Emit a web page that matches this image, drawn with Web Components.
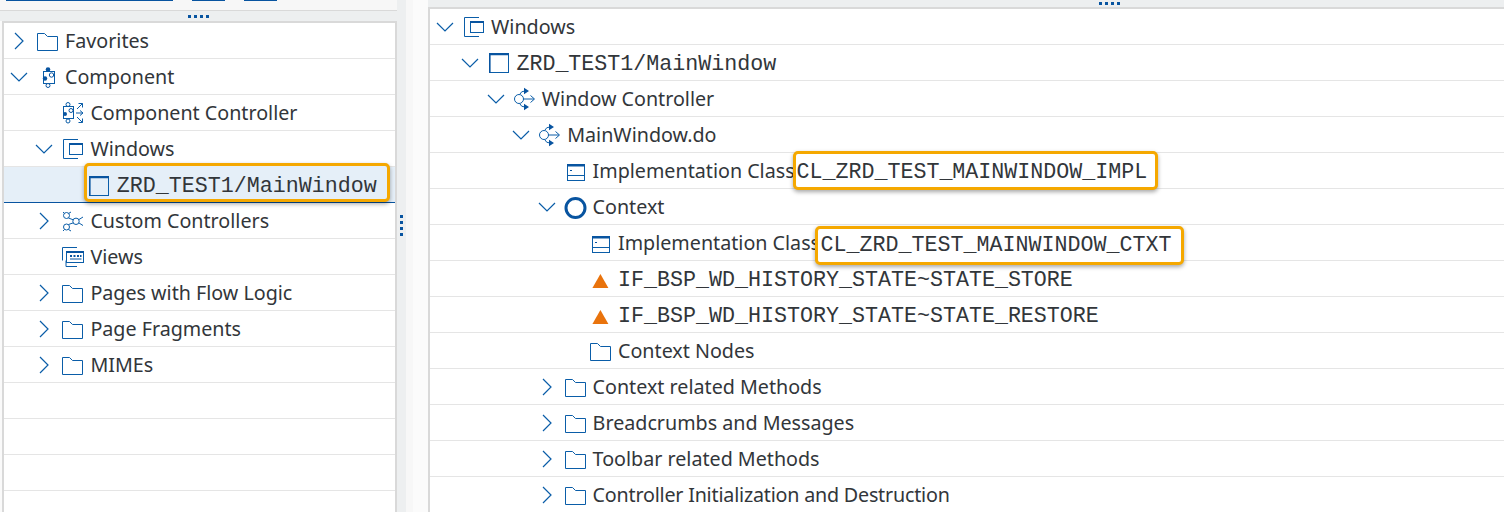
<!DOCTYPE html>
<html>
<head>
<meta charset="utf-8">
<title>Component tree</title>
<style>
	html, body { margin: 0; height: 512px; overflow: hidden; background: #fff; }
	body { font-family: "Noto Sans", sans-serif; color: #32363a; }
</style>
</head>
<body>
<workbench-app>
	<tree-pane slot="left" side="left">
		<tree-row arrow="right" icon="folder">Favorites</tree-row>
		<tree-row arrow="down" icon="component">Component</tree-row>
		<tree-row level="1" icon="compctrl">Component Controller</tree-row>
		<tree-row level="1" arrow="down" icon="windows">Windows</tree-row>
		<tree-row level="2" selected bare>
			<call-out style="--shift:-2px;--start:-2px;--top:7px;--fill:#e5eff8;width:306px"><tree-icon name="window" style="margin-left:-1px;margin-right:7px"></tree-icon>ZRD_TEST1/MainWindow</call-out>
		</tree-row>
		<tree-row level="1" arrow="right" icon="custom">Custom Controllers</tree-row>
		<tree-row level="1" icon="views">Views</tree-row>
		<tree-row level="1" arrow="right" icon="folder">Pages with Flow Logic</tree-row>
		<tree-row level="1" arrow="right" icon="folder">Page Fragments</tree-row>
		<tree-row level="1" arrow="right" icon="folder">MIMEs</tree-row>
		<tree-row></tree-row>
		<tree-row></tree-row>
		<tree-row></tree-row>
		<tree-row></tree-row>
	</tree-pane>
	<tree-pane slot="right" side="right">
		<tree-row arrow="down" icon="windows">Windows</tree-row>
		<tree-row level="1" arrow="down" icon="window" mono>ZRD_TEST1/MainWindow</tree-row>
		<tree-row level="2" arrow="down" icon="controller">Window Controller</tree-row>
		<tree-row level="3" arrow="down" icon="controller">MainWindow.do</tree-row>
		<tree-row level="4" icon="class">Implementation Class<call-out style="--shift:0px;--start:-1.2px;--top:4px;width:365px">CL_ZRD_TEST_MAINWINDOW_IMPL</call-out></tree-row>
		<tree-row level="4" arrow="down" icon="circle">Context</tree-row>
		<tree-row level="5" icon="class">Implementation Class<call-out style="--shift:3px;--start:-5.500px;--pad:3px;width:369px">CL_ZRD_TEST_MAINWINDOW_CTXT</call-out></tree-row>
		<tree-row level="5" icon="triangle" mono>IF_BSP_WD_HISTORY_STATE~STATE_STORE</tree-row>
		<tree-row level="5" icon="triangle" mono>IF_BSP_WD_HISTORY_STATE~STATE_RESTORE</tree-row>
		<tree-row level="5" icon="folder">Context Nodes</tree-row>
		<tree-row level="4" arrow="right" icon="folder">Context related Methods</tree-row>
		<tree-row level="4" arrow="right" icon="folder">Breadcrumbs and Messages</tree-row>
		<tree-row level="4" arrow="right" icon="folder">Toolbar related Methods</tree-row>
		<tree-row level="4" arrow="right" icon="folder" style="letter-spacing:-.2px">Controller Initialization and Destruction</tree-row>
	</tree-pane>
</workbench-app>

<script>
const ICONS = {
	folder: `<path class="s" d="M2.5 21.5V4.5h7l3 3h10v14z"/>`,
	window: `<rect class="s" x="3.5" y="2.5" width="19" height="19"/><path class="f" d="M3 2h20v2.2H3zM3 2h1.6v20H3z"/>`,
	windows: `<path class="s" d="M18 2.5H3.5v19H18"/><rect class="s" x="9.5" y="6.5" width="13" height="11"/><path class="f" d="M9 6h14v2H9z"/>`,
	class: `<rect class="s" x="4.5" y="5.5" width="17" height="16"/><path class="f" d="M4 5h18v2.600H4zM7 11h2v1H7z"/><path class="s" d="M4.500 16.500h17"/>`,
	circle: `<circle cx="12.500" cy="13" r="9.500" fill="none" stroke="#0854a0" stroke-width="3"/>`,
	triangle: `<path d="M4.400 21 12.400 7l8 14z" fill="#e9730c"/>`,
	component: `<circle class="f" cx="13" cy="4.500" r="2.300"/><rect class="s" x="8.500" y="6.500" width="11" height="12"/><circle class="f" cx="10" cy="13.500" r="2.200"/><circle cx="16.500" cy="10" r="2.200" fill="#fff" stroke="#0854a0"/><circle cx="13" cy="20.500" r="2" fill="#fff" stroke="#0854a0"/>`,
	compctrl: `<circle class="s" cx="8" cy="3.500" r="2"/><rect class="s" x="3.500" y="5.500" width="10" height="12"/><circle class="f" cx="5" cy="13" r="2"/><circle cx="11" cy="9.500" r="2" fill="#fff" stroke="#0854a0"/><circle class="s" cx="8" cy="20" r="2"/><path class="s" d="M17 8l5.500-5.500M18.500 2.500h4v4M16 12h7M20 9.500l3 2.500-3 2.500M17 16l5.500 5.500M18.500 21.500h4v-4"/>`,
	custom: `<g stroke-width="1.300"><circle class="s" cx="6.500" cy="6.500" r="3"/><circle class="s" cx="6.500" cy="18" r="3"/><circle class="s" cx="16" cy="12.300" r="3.200"/><path class="s" d="M8.500 9l4.700 1.800M8.500 15.500l4.700-1.600M19 10.500l4-2.500M19 14l4 2.500M3 3l1.500 1.500M11 3 8.500 4.500M3 22l1.500-1.500M11 22l-2.500-1.500"/></g>`,
	views: `<path class="s" d="M17 2.500H2.500v13M6 15.500v6h11"/><rect class="s" x="6.500" y="6.500" width="17" height="11" fill="#fff"/><path class="f" d="M6 6h18v2H6zM10 10h2v2h-2zM13.500 10h2v2h-2zM17 10h2v2h-2zM20 10h1.500v2H20zM10 13.500h11.500v1H10z"/>`,
	controller: `<circle class="s" cx="7" cy="12" r="4.500"/><path class="s" d="M11.500 12H22M18.500 8.500 22.500 12l-4 3.500"/><path class="s" stroke-width="2" d="M8 7q1-3 5-3M8 17q1 3 5 3"/><path class="f" d="M12 .8l5 3.200-5 3.200zM12 16.800l5 3.200-5 3.200z"/>`
};

const iconTemplate = document.createElement("template");
iconTemplate.innerHTML = `
	<style>
		:host { display: block; flex: none; width: 24px; height: 24px; }
		svg { display: block; width: 24px; height: 24px; overflow: visible; }
		.s { fill: none; stroke: #0a5da8; stroke-width: 1; }
		.f { fill: #0854a0; }
	</style>
	<svg viewBox="0 0 24 24"></svg>
`;

class TreeIcon extends HTMLElement {
	static get observedAttributes() {
		return ["name"];
	}

	constructor() {
		super();
		this.attachShadow({ mode: "open" });
		this.shadowRoot.appendChild(iconTemplate.content.cloneNode(true));
	}

	attributeChangedCallback(name, oldValue, newValue) {
		this.shadowRoot.querySelector("svg").innerHTML = ICONS[newValue] || "";
	}
}

const rowTemplate = document.createElement("template");
rowTemplate.innerHTML = `
	<style>
		:host {
			display: flex;
			align-items: center;
			box-sizing: border-box;
			height: 36px;
			padding-left: calc(5px + var(--level, 0) * 25.4px);
			border-bottom: 1px solid #e5e5e5;
			background: #fff;
			font-size: 19.7px;
			white-space: nowrap;
		}
		:host([selected]) { background: #e5eff8; border-bottom-color: #0854a0; }
		:host([mono]) .label { font-family: "Liberation Mono", monospace; font-size: 21.67px; padding-top: 4px; }
		.arrow { flex: none; width: 20px; height: 20px; margin-right: 6px; }
		.arrow path { fill: none; stroke: #0a5da8; stroke-width: 1.2; }
		tree-icon { margin-right: 6px; }
		.label { display: flex; align-items: center; }
	</style>
	<svg class="arrow" viewBox="0 0 20 20"><path></path></svg>
	<tree-icon></tree-icon>
	<span class="label"><slot></slot></span>
`;

const ARROWS = { right: "M6 2l8 8-8 8", down: "M2 6l8 8 8-8" };

class TreeRow extends HTMLElement {
	constructor() {
		super();
		this.attachShadow({ mode: "open" });
		this.shadowRoot.appendChild(rowTemplate.content.cloneNode(true));
	}

	connectedCallback() {
		this.style.setProperty("--level", this.getAttribute("level") || "0");
		this.shadowRoot.querySelector(".arrow path").setAttribute("d", ARROWS[this.getAttribute("arrow")] || "");
		const icon = this.shadowRoot.querySelector("tree-icon");
		if (this.hasAttribute("bare")) {
			icon.remove();
		} else {
			icon.setAttribute("name", this.getAttribute("icon") || "");
		}
	}
}

const calloutTemplate = document.createElement("template");
calloutTemplate.innerHTML = `
	<style>
		:host {
			display: flex;
			align-items: center;
			flex: none;
			box-sizing: border-box;
			position: relative;
			z-index: 1;
			height: 39px;
			margin-left: var(--start, 0);
			margin-top: calc(2 * var(--shift, 0px));
			padding-left: var(--pad, 0px);
			padding-top: var(--top, 0px);
			border: 3px solid #f5a800;
			border-radius: 5px;
			background: var(--fill, #fff);
			box-shadow: 0 2px 4px rgba(0, 0, 0, .35);
			font-family: "Liberation Mono", monospace;
			font-size: 21.67px;
			letter-spacing: 0;
		}
	</style>
	<slot></slot>
`;

class CallOut extends HTMLElement {
	constructor() {
		super();
		this.attachShadow({ mode: "open" });
		this.shadowRoot.appendChild(calloutTemplate.content.cloneNode(true));
	}

	connectedCallback() {
		const shift = parseFloat(this.style.getPropertyValue("--shift")) || 0;
		if (shift < 0) {
			this.style.marginTop = "0";
			this.style.marginBottom = `${-2 * shift}px`;
		}
	}
}

const paneTemplate = document.createElement("template");
paneTemplate.innerHTML = `
	<style>
		:host {
			display: block;
			box-sizing: border-box;
			overflow: hidden;
			flex: 1;
			min-height: 0;
			background: #fff;
			border-top: 2px solid #d9d9d9;
			border-left: 2px solid #d9d9d9;
		}
		:host([side="left"]) { border-right: 2px solid #d9d9d9; }
	</style>
	<slot></slot>
`;

class TreePane extends HTMLElement {
	constructor() {
		super();
		this.attachShadow({ mode: "open" });
		this.shadowRoot.appendChild(paneTemplate.content.cloneNode(true));
	}
}

const gripTemplate = document.createElement("template");
gripTemplate.innerHTML = `
	<style>
		:host { display: flex; flex: none; justify-content: center; align-items: center; gap: 3px; background: #edeff0; }
		:host([vertical]) { flex-direction: column; }
		i { display: block; width: 3px; height: 3px; background: #0854a0; }
	</style>
	<i></i><i></i><i></i><i></i>
`;

class GripBar extends HTMLElement {
	constructor() {
		super();
		this.attachShadow({ mode: "open" });
		this.shadowRoot.appendChild(gripTemplate.content.cloneNode(true));
	}
}

const appTemplate = document.createElement("template");
appTemplate.innerHTML = `
	<style>
		:host { display: flex; width: 1504px; height: 512px; background: #fafafa; }
		.left { display: flex; flex-direction: column; flex: none; width: 395px; padding-left: 2px; }
		.toolbar { display: flex; flex: none; gap: 19px; box-sizing: border-box; height: 11px; margin-left: -2px; padding-left: 6px; background: #f7f7f7; border-bottom: 1px solid #d9d9d9; }
		.toolbar i { display: block; height: 1px; background: #0854a0; }
		.left grip-bar { height: 10px; margin-left: -2px; }
		.splitter { display: flex; flex: none; width: 31px; }
		.splitter grip-bar { width: 9px; padding-bottom: 61px; box-sizing: border-box; }
		.splitter .a { width: 7px; background: #f7f7f7; }
		.splitter .b { width: 15px; background: #fbfbfb; }
		.right { display: flex; flex-direction: column; flex: 1; min-width: 0; }
		.right grip-bar { height: 7px; padding-left: 286px; }
	</style>
	<div class="left">
		<div class="toolbar"><i style="width:167px"></i><i style="width:33px"></i><i style="width:33px"></i></div>
		<grip-bar></grip-bar>
		<slot name="left"></slot>
	</div>
	<div class="splitter">
		<grip-bar vertical></grip-bar><div class="a"></div><div class="b"></div>
	</div>
	<div class="right">
		<grip-bar></grip-bar>
		<slot name="right"></slot>
	</div>
`;

class WorkbenchApp extends HTMLElement {
	constructor() {
		super();
		this.attachShadow({ mode: "open" });
		this.shadowRoot.appendChild(appTemplate.content.cloneNode(true));
	}
}

customElements.define("tree-icon", TreeIcon);
customElements.define("tree-row", TreeRow);
customElements.define("call-out", CallOut);
customElements.define("tree-pane", TreePane);
customElements.define("grip-bar", GripBar);
customElements.define("workbench-app", WorkbenchApp);
</script>
</body>
</html>
